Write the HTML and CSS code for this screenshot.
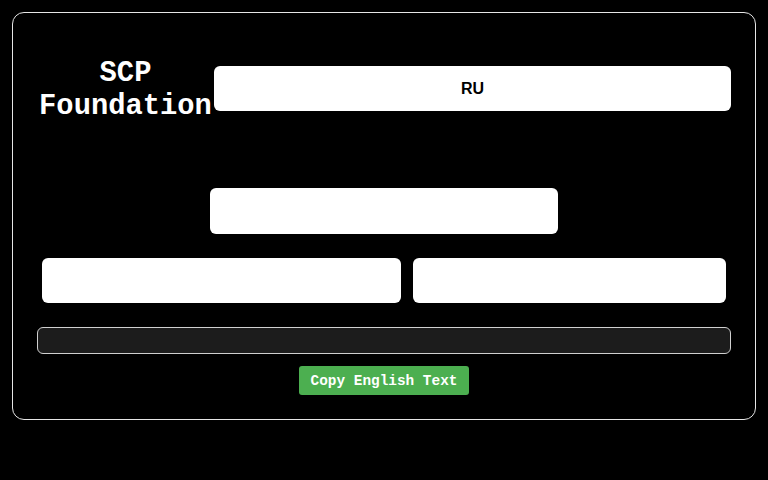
FILE: index.html
```html
<!DOCTYPE html>
<html lang="en">
<head>
    <meta charset="UTF-8">
    <meta name="viewport" content="width=device-width, initial-scale=1.0">
    <title>SCP Foundation Translator</title>
    <link rel="stylesheet" href="styles.css">
</head>
<body>
    <div class="container">
        <div class="header">
            <h1>SCP<br>Foundation</h1>
            <div class="lang-select">RU</div>
        </div>

        <div class="field field-main"></div>

        <div class="row">
            <div class="field field-left"></div>
            <div class="field field-right"></div>
        </div>

        <div class="output"></div>

        <button class="button" id="copyButton">Copy English Text</button>
    </div>
</body>
</html>
```

FILE: styles.css
```css
body {
    background-color: #000;
    margin: 0;
    padding: 12px;
    font-family: "Liberation Mono", "Courier New", monospace;
}
.container {
    border: 1px solid #e6e6e6;
    border-radius: 12px;
    padding: 24px;
    width: 694px;
    display: flex;
    flex-direction: column;
    align-items: center;
}
.header {
    display: flex;
    align-items: center;
    width: 100%;
    padding-top: 19px;
}
h1 {
    color: #fff;
    font-size: 28.8px;
    line-height: 32.5px;
    font-weight: bold;
    text-align: center;
    margin: 0 0 -3px;
    padding-top: 2px;
    width: 177px;
}
.lang-select {
    flex: 1;
    height: 45px;
    background-color: #fff;
    border-radius: 6px;
    display: flex;
    align-items: center;
    justify-content: center;
    font-family: "Liberation Sans", Arial, sans-serif;
    font-weight: bold;
    font-size: 16px;
    color: #000;
    padding-top: 2px;
    box-sizing: border-box;
}
.field {
    background-color: #fff;
    border-radius: 6px;
    height: 45px;
}
.field-main {
    width: 348px;
    height: 46px;
    margin-top: 68px;
}
.row {
    display: flex;
    gap: 12px;
    width: 684px;
    margin-top: 24px;
}
.field-left {
    width: 359px;
}
.field-right {
    flex: 1;
}
.output {
    width: 692px;
    height: 25px;
    background-color: #1c1c1c;
    border: 1px solid #d0d0d0;
    border-radius: 6px;
    margin-top: 24px;
}
.button {
    margin-top: 12px;
    background-color: #4caf50;
    color: #fff;
    border: none;
    border-radius: 3px;
    height: 29px;
    width: 170px;
    padding: 0;
    font-family: "Liberation Mono", "Courier New", monospace;
    font-weight: bold;
    font-size: 14.4px;
    cursor: pointer;
}
```
